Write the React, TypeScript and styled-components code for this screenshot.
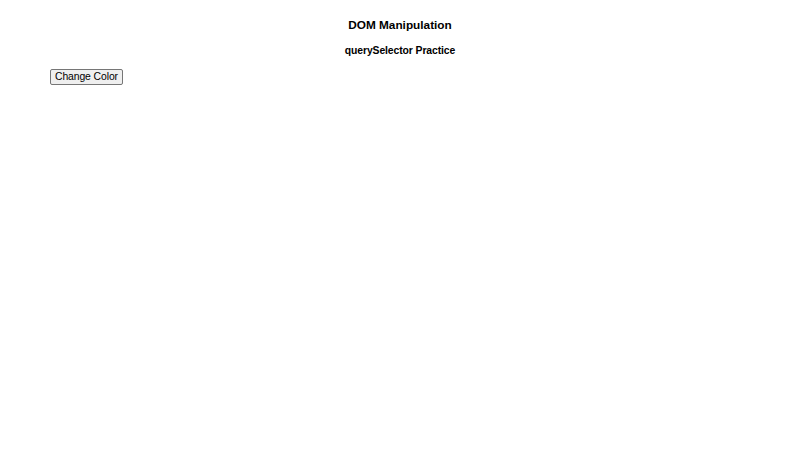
import * as React from "react";
import styled, { createGlobalStyle } from "styled-components";

const GlobalStyle = createGlobalStyle`
  html, body {
    margin: 0;
    padding: 0;
    background: #ffffff;
  }
  body {
    font-family: "Liberation Sans", Arial, sans-serif;
    color: #000000;
  }
`;

const Page = styled.div`
  padding: 18px 50px 0;
`;

const Title = styled.h1`
  margin: 0;
  font-size: 11.8px;
  font-weight: bold;
  line-height: 14px;
  text-align: center;
`;

const Subtitle = styled.h2`
  margin: 12px 0 0;
  font-size: 10.4px;
  font-weight: bold;
  line-height: 14px;
  letter-spacing: -0.1px;
  text-align: center;
`;

const ColorButton = styled.button`
  display: block;
  margin-top: 11px;
  height: 16px;
  padding: 0 4px;
  font-family: "Liberation Sans", Arial, sans-serif;
  font-size: 10.4px;
  line-height: 14px;
  letter-spacing: -0.1px;
  color: #000000;
  background: #efefef;
  border: 1px solid #767676;
  border-radius: 2px;
`;

export default function App() {
  const [color, setColor] = React.useState("#000000");
  return (
    <>
      <GlobalStyle />
      <Page>
        <Title style={{ color }}>DOM Manipulation</Title>
        <Subtitle>querySelector Practice</Subtitle>
        <ColorButton onClick={() => setColor(color === "#000000" ? "#c0392b" : "#000000")}>
          Change Color
        </ColorButton>
      </Page>
    </>
  );
}
